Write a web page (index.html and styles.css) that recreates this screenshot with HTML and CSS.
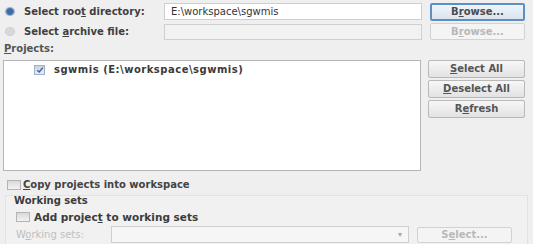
FILE: index.html
```html
<!DOCTYPE html>
<html>
<head>
<meta charset="utf-8">
<link rel="stylesheet" href="styles.css">
</head>
<body>
<div class="page">
  <div class="row r1">
    <label class="opt"><span class="radio on"></span><span>Select roo<u>t</u> directory:</span></label>
    <div class="field">E:\workspace\sgwmis</div>
    <div class="btn focus">B<u>r</u>owse...</div>
  </div>
  <div class="row r2">
    <label class="opt"><span class="radio"></span><span>Select <u>a</u>rchive file:</span></label>
    <div class="field dis"></div>
    <div class="btn dis">B<u>r</u>owse...</div>
  </div>
  <div class="plabel"><u>P</u>rojects:</div>
  <div class="projects">
    <div class="list">
      <div class="item"><span class="cb checked"><svg viewBox="0 0 8 8" width="8" height="8"><path d="M1.2 4.2 L3.2 6 L6.8 1.6" fill="none" stroke="#3a5fa8" stroke-width="1.3"/></svg></span><span>sgwmis (E:\workspace\sgwmis)</span></div>
    </div>
    <div class="side">
      <div class="btn"><u>S</u>elect All</div>
      <div class="btn"><u>D</u>eselect All</div>
      <div class="btn">R<u>e</u>fresh</div>
    </div>
  </div>
  <label class="copy"><span class="cb wide"></span><span><u>C</u>opy projects into workspace</span></label>
  <div class="group">
    <div class="gtitle">Working sets</div>
    <label class="add"><span class="cb wide"></span><span>Add projec<u>t</u> to working sets</span></label>
    <div class="wsrow">
      <span class="wslabel">W<u>o</u>rking sets:</span>
      <div class="combo"><span class="arrow">&#9662;</span></div>
      <div class="btn dis sel">S<u>e</u>lect...</div>
    </div>
  </div>
</div>
</body>
</html>
```
FILE: styles.css
```css
html, body {
  margin: 0;
  padding: 0;
  background: #efefef;
}
body {
  width: 533px;
  height: 244px;
  overflow: hidden;
  font-family: "DejaVu Sans", sans-serif;
  font-size: 10px;
  font-weight: bold;
  color: #3c3c3c;
}
u { text-decoration: underline; }
.page {
  padding: 0 8px 0 3px;
}
.row {
  display: flex;
  align-items: center;
}
.r1 { height: 21px; padding-top: 1px; }
.r2 { height: 19px; }
.opt {
  width: 159px;
  display: flex;
  align-items: center;
  gap: 9px;
  padding-left: 2px;
  color: #404040;
}
.radio {
  width: 8px;
  height: 7px;
  border-radius: 50%;
  background: #d8d8d8;
  border: 1px solid #cfcfcf;
  flex: none;
}
.radio.on {
  background: radial-gradient(circle, #3d6ca8 0 55%, #6d8fc0 70%, #c9d4e6 100%);
  border-color: #9fb2cc;
}
.field {
  width: 250px;
  height: 15px;
  line-height: 15px;
  border: 1px solid #cfcfcf;
  background: #fff;
  padding-left: 6px;
  font-weight: normal;
  font-size: 10px;
  color: #333;
}
.field.dis {
  background: #f2f2f2;
  height: 14px;
}
.btn {
  margin-left: 8px;
  width: 93px;
  height: 15px;
  line-height: 15px;
  text-align: center;
  border: 1px solid #b9b9b9;
  border-radius: 2px;
  background: linear-gradient(#f7f7f7, #e2e2e2);
  color: #555;
}
.btn.focus {
  border: 2px solid #5d90c0;
  height: 14px;
  line-height: 14px;
  width: 91px;
  background: linear-gradient(#eef4fa, #dbe5ef);
  color: #4a4a4a;
}
.btn.dis {
  background: #f4f4f4;
  border-color: #d2d2d2;
  color: #b8b8b8;
}
.plabel {
  height: 17px;
  line-height: 16px;
  padding-left: 1px;
  color: #555;
}
.projects {
  display: flex;
  margin-top: 2px;
}
.list {
  width: 416px;
  height: 109px;
  border: 1px solid #b5b5b5;
  background: #fff;
}
.item {
  display: flex;
  align-items: center;
  gap: 9px;
  padding: 3px 0 0 30px;
  color: #3a3a3a;
  letter-spacing: 0.5px;
}
.cb {
  display: inline-flex;
  align-items: center;
  justify-content: center;
  width: 9px;
  height: 8px;
  border: 1px solid #a9a9a9;
  background: linear-gradient(#d9d9d9, #f2f2f2);
  flex: none;
}
.cb.wide {
  width: 12px;
  height: 8px;
  border-color: #b4b4b4;
}
.cb.checked {
  background: linear-gradient(#c8d3e3, #e6ecf5);
  border-color: #9fb0c8;
}
.side {
  display: flex;
  flex-direction: column;
  gap: 2px;
}
.side .btn {
  margin-left: 7px;
  width: 95px;
  height: 16px;
  line-height: 16px;
}
.copy {
  display: flex;
  align-items: center;
  gap: 2px;
  margin-top: 8px;
  padding-left: 4px;
  color: #444;
}
.group {
  margin: 5px -3px 0 2px;
  border: 1px solid #e2e2e2;
  border-bottom: none;
  height: 60px;
  padding-left: 8px;
  background: #f1f1f1;
}
.gtitle {
  margin-top: -1px;
  color: #3c3c3c;
  height: 12px;
  line-height: 12px;
}
.add {
  display: flex;
  align-items: center;
  gap: 4px;
  margin-top: 4px;
  padding-left: 2px;
  color: #3c3c3c;
  font-size: 10.5px;
}
.wsrow {
  display: flex;
  align-items: center;
  margin-top: 3px;
}
.wslabel {
  width: 95px;
  color: #c0c0c0;
  font-weight: normal;
  padding-left: 2px;
}
.combo {
  width: 296px;
  height: 15px;
  border: 1px solid #d0d0d0;
  background: #f6f6f6;
  display: flex;
  justify-content: flex-end;
  align-items: center;
}
.arrow {
  color: #a8a8a8;
  font-size: 8px;
  padding-right: 6px;
  font-weight: normal;
}
.btn.sel {
  width: 93px;
  height: 14px;
  line-height: 14px;
}
```
